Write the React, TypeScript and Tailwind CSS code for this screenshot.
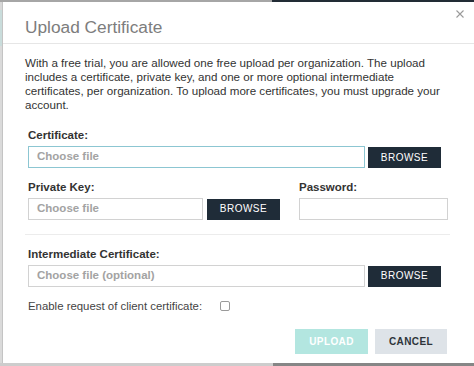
import React from "react";

function BrowseButton({ className = "" }: { className?: string }) {
  return (
    <button
      type="button"
      className={`h-[21px] w-[73px] shrink-0 bg-[#1f2c38] text-white text-[10px] tracking-[0.5px] leading-none flex items-center justify-center ${className}`}
    >
      BROWSE
    </button>
  );
}

function FileInput({ width, placeholder, focused = false }: { width: string; placeholder: string; focused?: boolean }) {
  return (
    <div
      className={`${width} h-[22px] bg-white border flex items-center pl-[8px] text-[11.5px] font-bold text-[#a3a3a3] ${
        focused ? "border-[#8cc6d2]" : "border-[#d2d2d2]"
      }`}
    >
      {placeholder}
    </div>
  );
}

export default function App() {
  return (
    <div className="w-[474px] h-[366px] overflow-hidden bg-white flex flex-col font-['Liberation_Sans',Arial,sans-serif]">
      {/* top backdrop band */}
      <div className="h-[2px] flex shrink-0">
        <div className="w-[272px] bg-[#a6a6a6]" />
        <div className="flex-1 bg-[#222c35]" />
      </div>

      <div className="flex flex-1 min-h-0">
        {/* left backdrop strip */}
        <div className="w-[3px] flex flex-col shrink-0 border-r border-[#c4c4c4]">
          <div className="h-[8px] bg-[#d8d8d8]" />
          <div className="h-[36px] bg-[#c9dcdb]" />
          <div className="flex-1 bg-[#dadada]" />
        </div>

        {/* modal */}
        <div className="flex-1 flex flex-col bg-white">
          {/* header */}
          <div className="h-[42px] border-b border-[#e6e6e6] flex items-start justify-between pl-[22px] pr-[11px] shrink-0">
            <div className="pt-[15px] text-[17.3px] leading-[20px] text-[#7d7d7d]">Upload Certificate</div>
            <svg className="mt-[8px]" width="8" height="8" viewBox="0 0 8 8" fill="none">
              <path d="M0.5 0.5L7.5 7.5M7.5 0.5L0.5 7.5" stroke="#9a9a9a" strokeWidth="1.1" />
            </svg>
          </div>

          {/* body */}
          <div className="px-[22px] flex flex-col">
            <p className="mt-[12px] w-[428px] text-[11.6px] leading-[14px] text-[#333]">
              With a free trial, you are allowed one free upload per organization. The upload includes a certificate,
              private key, and one or more optional intermediate certificates, per organization. To upload more
              certificates, you must upgrade your account.
            </p>

            <div className="pl-[3px] flex flex-col">
              <label className="mt-[16px] text-[11.5px] leading-[14px] font-bold text-[#333]">Certificate:</label>
              <div className="mt-[4px] flex items-center gap-[3px]">
                <FileInput width="w-[337px]" placeholder="Choose file" focused />
                <BrowseButton className="mt-[1px]" />
              </div>

              <div className="mt-[12px] flex items-end">
                <div className="flex flex-col">
                  <label className="text-[11.5px] leading-[14px] font-bold text-[#333]">Private Key:</label>
                  <div className="mt-[4px] flex items-center gap-[4px]">
                    <FileInput width="w-[175px]" placeholder="Choose file" />
                    <BrowseButton />
                  </div>
                </div>
                <div className="ml-[19px] flex flex-col">
                  <label className="text-[11.5px] leading-[14px] font-bold text-[#333]">Password:</label>
                  <div className="mt-[4px] w-[149px] h-[22px] border border-[#d2d2d2] bg-white" />
                </div>
              </div>
            </div>

            <div className="mt-[14px] h-px w-[425px] bg-[#ececec]" />

            <div className="pl-[3px] flex flex-col">
              <label className="mt-[12px] text-[11.5px] leading-[14px] font-bold text-[#333]">
                Intermediate Certificate:
              </label>
              <div className="mt-[4px] flex items-center gap-[3px]">
                <FileInput width="w-[337px]" placeholder="Choose file (optional)" />
                <BrowseButton />
              </div>

              <div className="mt-[12px] flex items-center">
                <span className="text-[11.4px] leading-[14px] text-[#444]">Enable request of client certificate:</span>
                <span className="ml-[18px] w-[10px] h-[10px] rounded-[2px] border border-[#9a9a9a] bg-white" />
              </div>
            </div>

            <div className="mt-[16px] flex justify-end gap-[7px] pr-[6px]">
              <button
                type="button"
                className="w-[73px] h-[25px] bg-[#b3e6e0] text-white text-[10px] font-bold tracking-[0.4px] flex items-center justify-center"
              >
                UPLOAD
              </button>
              <button
                type="button"
                className="w-[72px] h-[25px] bg-[#dee3e8] text-[#2e343a] text-[10px] font-bold tracking-[0.4px] flex items-center justify-center"
              >
                CANCEL
              </button>
            </div>
          </div>
        </div>
      </div>

      {/* bottom backdrop band */}
      <div className="h-[3px] flex shrink-0">
        <div className="w-[273px] bg-[#cdcdcd]" />
        <div className="flex-1 bg-[#868686]" />
      </div>
    </div>
  );
}
